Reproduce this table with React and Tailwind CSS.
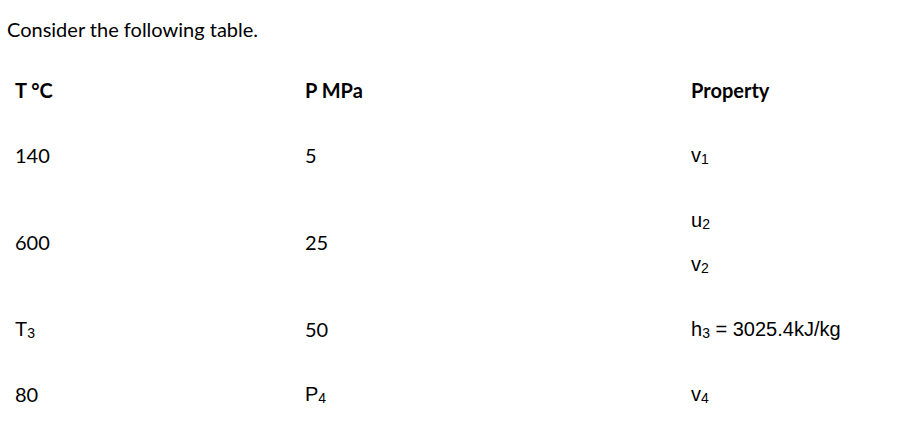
import React from 'react';

const lato = "font-['Lato','Liberation_Sans',sans-serif]";
const arial = "font-['Liberation_Sans','Arial',sans-serif]";

const Sub = ({ children }) => (
  <sub className="text-[14px] leading-none relative top-[2px] align-baseline">{children}</sub>
);

const Cell = ({ children, className = '' }) => (
  <div className={`py-[20px] flex flex-col justify-center gap-[19px] ${className}`}>{children}</div>
);

const Line = ({ children, className = '' }) => (
  <p className={`leading-[25px] ${className}`}>{children}</p>
);

export default function App() {
  return (
    <div className={`w-[900px] h-[421px] bg-white text-black text-[20px] overflow-hidden ${lato}`}>
      <p className="pt-[16px] pl-[7px] leading-[27px]">Consider the following table.</p>

      <div className="mt-[15px] pl-[15px] grid grid-cols-[290px_386px_1fr]">
        {/* header */}
        <Cell><Line className="font-bold">T °C</Line></Cell>
        <Cell><Line className="font-bold">P MPa</Line></Cell>
        <Cell><Line className="font-bold">Property</Line></Cell>

        <Cell><Line>140</Line></Cell>
        <Cell><Line>5</Line></Cell>
        <Cell><Line className={arial}>v<Sub>1</Sub></Line></Cell>

        <Cell><Line>600</Line></Cell>
        <Cell><Line>25</Line></Cell>
        <Cell className={arial}>
          <Line>u<Sub>2</Sub></Line>
          <Line>v<Sub>2</Sub></Line>
        </Cell>

        <Cell><Line className={arial}>T<Sub>3</Sub></Line></Cell>
        <Cell><Line>50</Line></Cell>
        <Cell><Line className={arial}>h<Sub>3</Sub> = 3025.4kJ/kg</Line></Cell>

        <Cell><Line>80</Line></Cell>
        <Cell><Line className={arial}>P<Sub>4</Sub></Line></Cell>
        <Cell><Line className={arial}>v<Sub>4</Sub></Line></Cell>
      </div>
    </div>
  );
}
